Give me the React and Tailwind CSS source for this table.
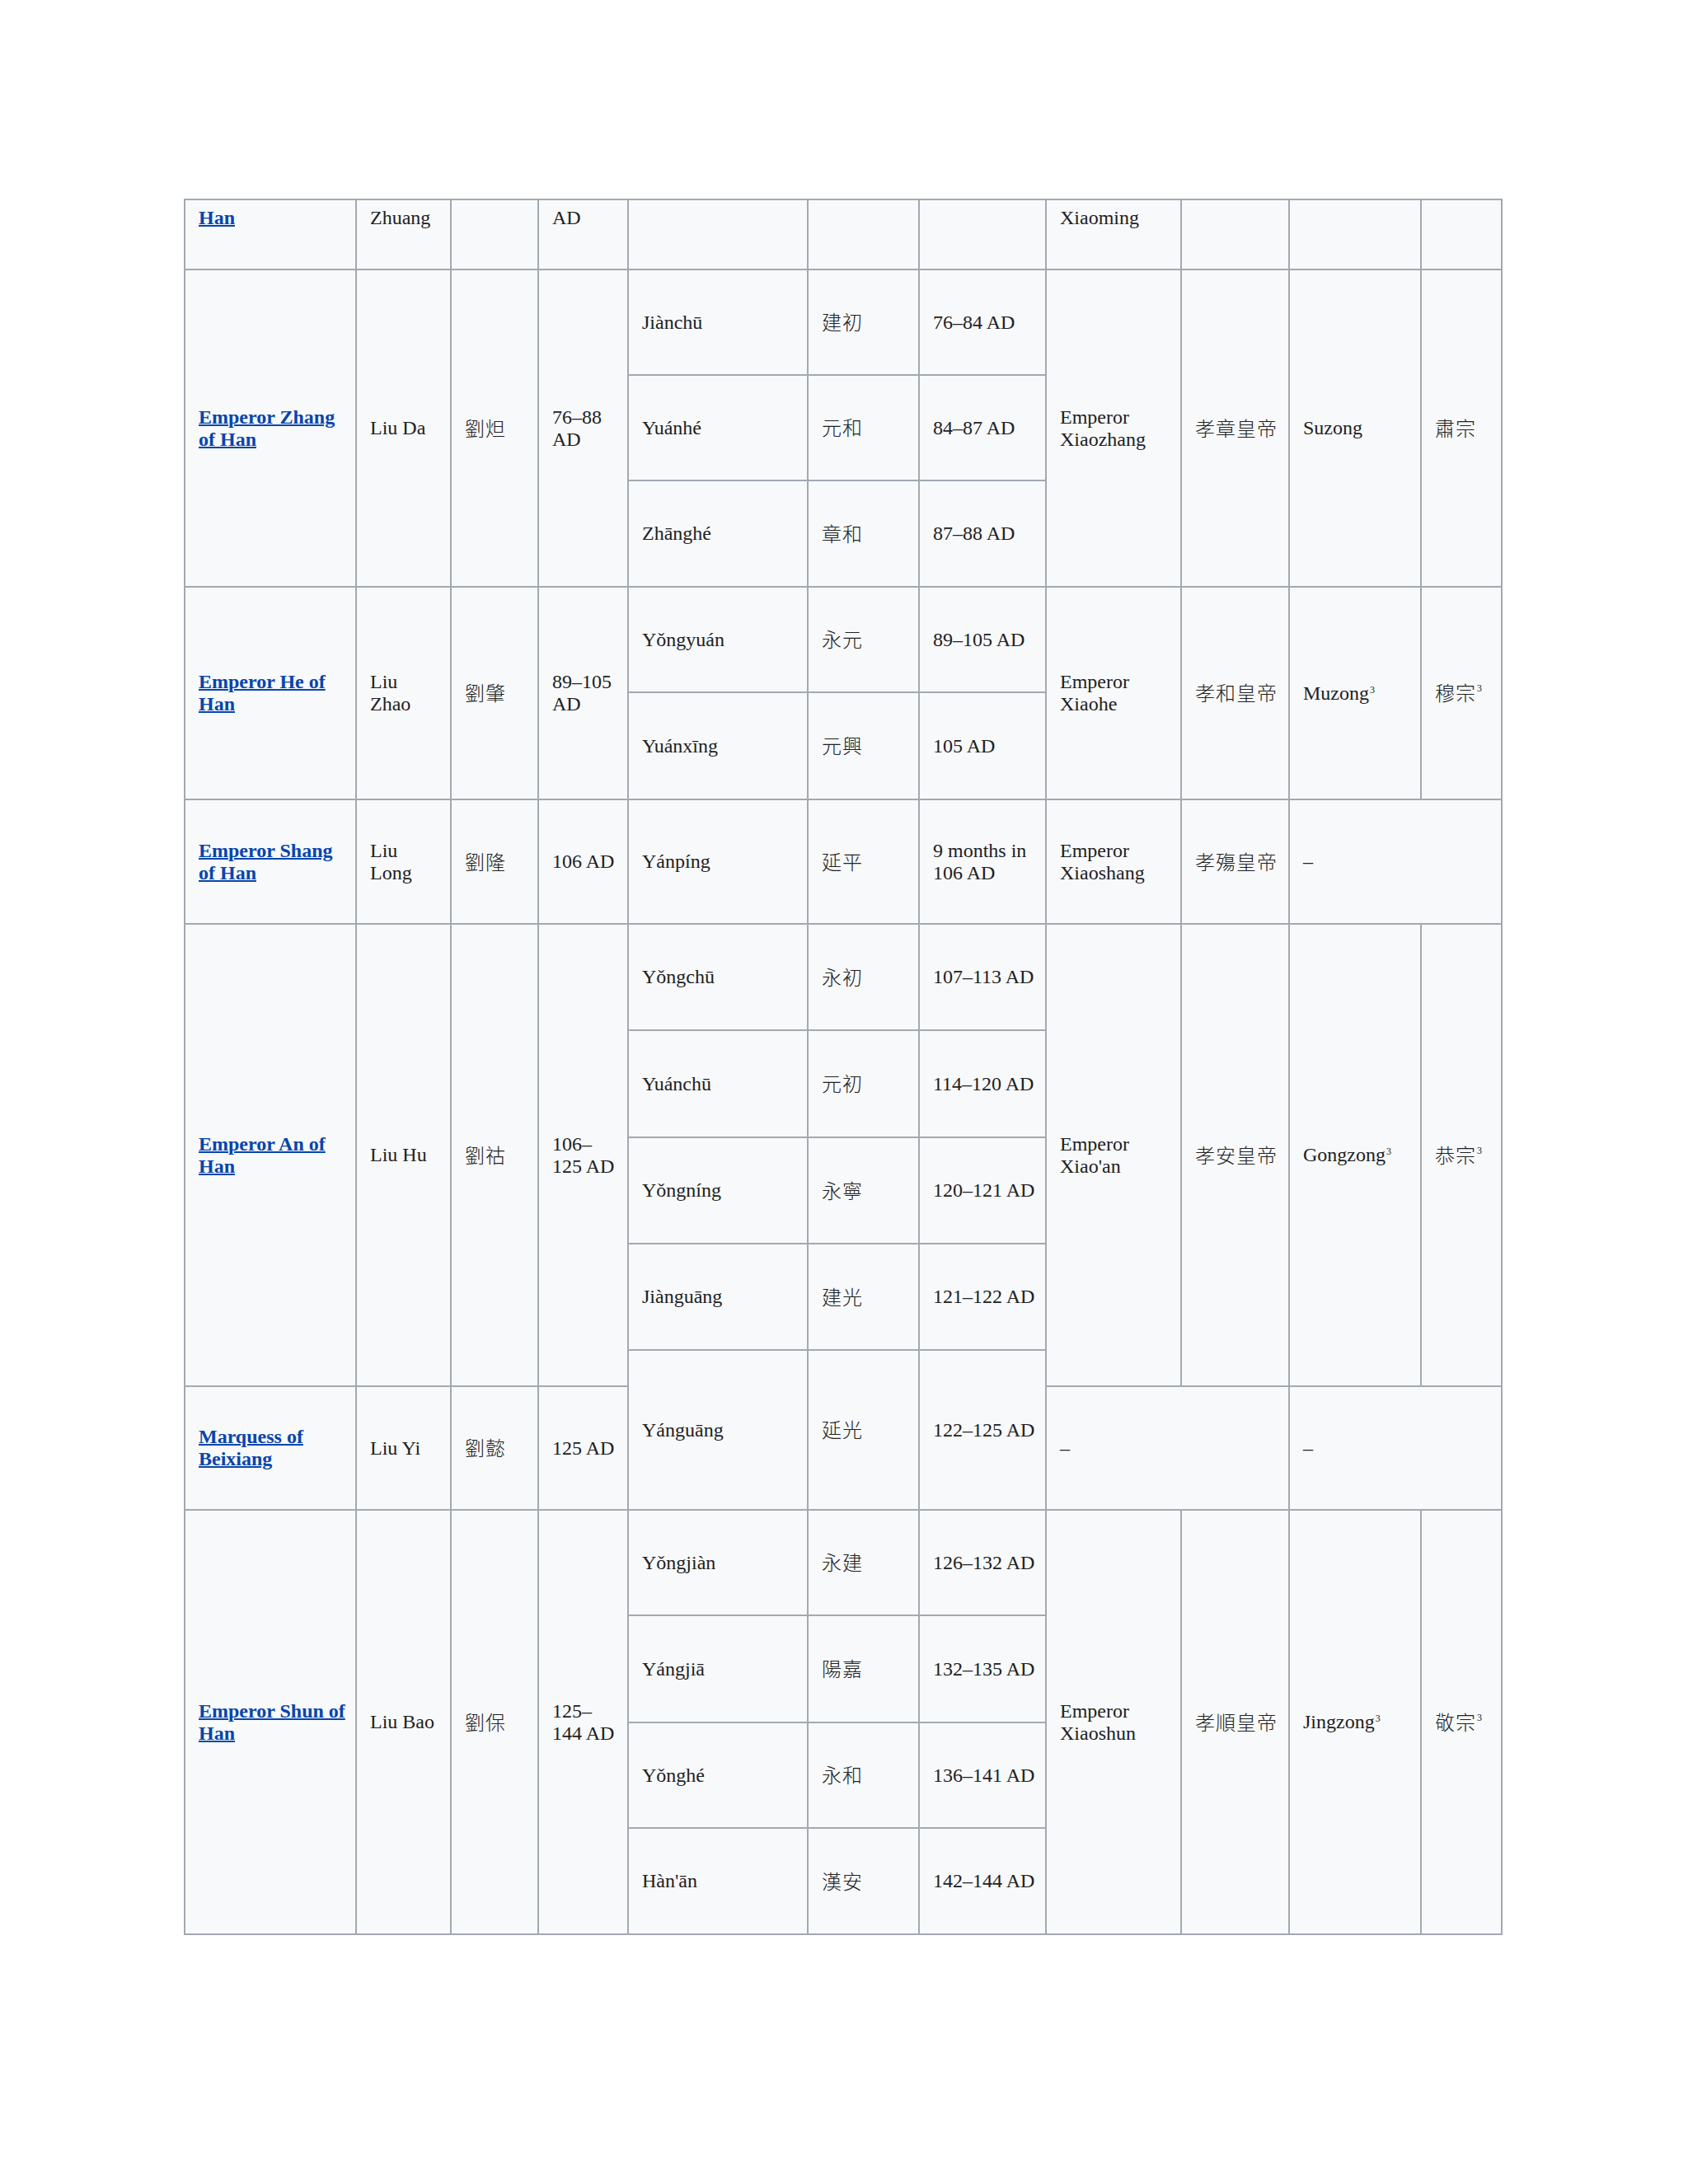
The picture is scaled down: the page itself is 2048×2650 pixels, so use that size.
import React from "react";

const FONT = { fontFamily: '"Liberation Serif", "Noto Sans CJK TC", serif' };

function L({ children }) {
  return (
    <a className="font-bold text-[#0645ad] underline decoration-[2px]">{children}</a>
  );
}

function Sup() {
  return <span className="text-[12px] leading-none align-[8px] ml-[1px] font-normal">3</span>;
}

function C({ children }) {
  return <span className="font-light tracking-[1px] align-[-3px]">{children}</span>;
}

const cells = [
  // row 0 (continuation row)
  { c: "col-start-1 row-start-1", top: true, t: <L>Han</L> },
  { c: "col-start-2 row-start-1", top: true, t: "Zhuang" },
  { c: "col-start-3 row-start-1", top: true, t: "" },
  { c: "col-start-4 row-start-1", top: true, t: "AD" },
  { c: "col-start-5 row-start-1", top: true, t: "" },
  { c: "col-start-6 row-start-1", top: true, t: "" },
  { c: "col-start-7 row-start-1", top: true, t: "" },
  { c: "col-start-8 row-start-1", top: true, t: "Xiaoming" },
  { c: "col-start-9 row-start-1", top: true, t: "" },
  { c: "col-start-10 row-start-1", top: true, t: "" },
  { c: "col-start-11 row-start-1", top: true, t: "" },

  // Zhang
  { c: "col-start-1 row-start-2 row-span-3", t: <L>Emperor Zhang<br />of Han</L> },
  { c: "col-start-2 row-start-2 row-span-3", t: "Liu Da" },
  { c: "col-start-3 row-start-2 row-span-3", t: <C>劉炟</C> },
  { c: "col-start-4 row-start-2 row-span-3", t: <>76–88<br />AD</> },
  { c: "col-start-5 row-start-2", t: "Jiànchū" },
  { c: "col-start-6 row-start-2", t: <C>建初</C> },
  { c: "col-start-7 row-start-2", t: "76–84 AD" },
  { c: "col-start-5 row-start-3", t: "Yuánhé" },
  { c: "col-start-6 row-start-3", t: <C>元和</C> },
  { c: "col-start-7 row-start-3", t: "84–87 AD" },
  { c: "col-start-5 row-start-4", t: "Zhānghé" },
  { c: "col-start-6 row-start-4", t: <C>章和</C> },
  { c: "col-start-7 row-start-4", t: "87–88 AD" },
  { c: "col-start-8 row-start-2 row-span-3", t: <>Emperor<br />Xiaozhang</> },
  { c: "col-start-9 row-start-2 row-span-3", t: <C>孝章皇帝</C> },
  { c: "col-start-10 row-start-2 row-span-3", t: "Suzong" },
  { c: "col-start-11 row-start-2 row-span-3", t: <C>肅宗</C> },

  // He
  { c: "col-start-1 row-start-5 row-span-2", t: <L>Emperor He of<br />Han</L> },
  { c: "col-start-2 row-start-5 row-span-2", t: <>Liu<br />Zhao</> },
  { c: "col-start-3 row-start-5 row-span-2", t: <C>劉肇</C> },
  { c: "col-start-4 row-start-5 row-span-2", t: <>89–105<br />AD</> },
  { c: "col-start-5 row-start-5", t: "Yǒngyuán" },
  { c: "col-start-6 row-start-5", t: <C>永元</C> },
  { c: "col-start-7 row-start-5", t: "89–105 AD" },
  { c: "col-start-5 row-start-6", t: "Yuánxīng" },
  { c: "col-start-6 row-start-6", t: <C>元興</C> },
  { c: "col-start-7 row-start-6", t: "105 AD" },
  { c: "col-start-8 row-start-5 row-span-2", t: <>Emperor<br />Xiaohe</> },
  { c: "col-start-9 row-start-5 row-span-2", t: <C>孝和皇帝</C> },
  { c: "col-start-10 row-start-5 row-span-2", t: <>Muzong<Sup /></> },
  { c: "col-start-11 row-start-5 row-span-2", t: <><C>穆宗</C><Sup /></> },

  // Shang
  { c: "col-start-1 row-start-7", t: <L>Emperor Shang<br />of Han</L> },
  { c: "col-start-2 row-start-7", t: <>Liu<br />Long</> },
  { c: "col-start-3 row-start-7", t: <C>劉隆</C> },
  { c: "col-start-4 row-start-7", t: "106 AD" },
  { c: "col-start-5 row-start-7", t: "Yánpíng" },
  { c: "col-start-6 row-start-7", t: <C>延平</C> },
  { c: "col-start-7 row-start-7", t: <>9 months in<br />106 AD</> },
  { c: "col-start-8 row-start-7", t: <>Emperor<br />Xiaoshang</> },
  { c: "col-start-9 row-start-7", t: <C>孝殤皇帝</C> },
  { c: "col-start-10 row-start-7 col-span-2", t: "–" },

  // An
  { c: "col-start-1 row-start-8 row-span-5", t: <L>Emperor An of<br />Han</L> },
  { c: "col-start-2 row-start-8 row-span-5", t: "Liu Hu" },
  { c: "col-start-3 row-start-8 row-span-5", t: <C>劉祜</C> },
  { c: "col-start-4 row-start-8 row-span-5", t: <>106–<br />125 AD</> },
  { c: "col-start-5 row-start-8", t: "Yǒngchū" },
  { c: "col-start-6 row-start-8", t: <C>永初</C> },
  { c: "col-start-7 row-start-8", t: "107–113 AD" },
  { c: "col-start-5 row-start-9", t: "Yuánchū" },
  { c: "col-start-6 row-start-9", t: <C>元初</C> },
  { c: "col-start-7 row-start-9", t: "114–120 AD" },
  { c: "col-start-5 row-start-10", t: "Yǒngníng" },
  { c: "col-start-6 row-start-10", t: <C>永寧</C> },
  { c: "col-start-7 row-start-10", t: "120–121 AD" },
  { c: "col-start-5 row-start-11", t: "Jiànguāng" },
  { c: "col-start-6 row-start-11", t: <C>建光</C> },
  { c: "col-start-7 row-start-11", t: "121–122 AD" },
  { c: "col-start-5 row-start-12 row-span-2", t: "Yánguāng" },
  { c: "col-start-6 row-start-12 row-span-2", t: <C>延光</C> },
  { c: "col-start-7 row-start-12 row-span-2", t: "122–125 AD" },
  { c: "col-start-8 row-start-8 row-span-5", t: <>Emperor<br />Xiao'an</> },
  { c: "col-start-9 row-start-8 row-span-5", t: <C>孝安皇帝</C> },
  { c: "col-start-10 row-start-8 row-span-5", t: <>Gongzong<Sup /></> },
  { c: "col-start-11 row-start-8 row-span-5", t: <><C>恭宗</C><Sup /></> },

  // Beixiang
  { c: "col-start-1 row-start-13", t: <L>Marquess of<br />Beixiang</L> },
  { c: "col-start-2 row-start-13", t: "Liu Yi" },
  { c: "col-start-3 row-start-13", t: <C>劉懿</C> },
  { c: "col-start-4 row-start-13", t: "125 AD" },
  { c: "col-start-8 row-start-13 col-span-2", t: "–" },
  { c: "col-start-10 row-start-13 col-span-2", t: "–" },

  // Shun
  { c: "col-start-1 row-start-14 row-span-4", t: <L>Emperor Shun of<br />Han</L> },
  { c: "col-start-2 row-start-14 row-span-4", t: "Liu Bao" },
  { c: "col-start-3 row-start-14 row-span-4", t: <C>劉保</C> },
  { c: "col-start-4 row-start-14 row-span-4", t: <>125–<br />144 AD</> },
  { c: "col-start-5 row-start-14", t: "Yǒngjiàn" },
  { c: "col-start-6 row-start-14", t: <C>永建</C> },
  { c: "col-start-7 row-start-14", t: "126–132 AD" },
  { c: "col-start-5 row-start-15", t: "Yángjiā" },
  { c: "col-start-6 row-start-15", t: <C>陽嘉</C> },
  { c: "col-start-7 row-start-15", t: "132–135 AD" },
  { c: "col-start-5 row-start-16", t: "Yǒnghé" },
  { c: "col-start-6 row-start-16", t: <C>永和</C> },
  { c: "col-start-7 row-start-16", t: "136–141 AD" },
  { c: "col-start-5 row-start-17", t: "Hàn'ān" },
  { c: "col-start-6 row-start-17", t: <C>漢安</C> },
  { c: "col-start-7 row-start-17", t: "142–144 AD" },
  { c: "col-start-8 row-start-14 row-span-4", t: <>Emperor<br />Xiaoshun</> },
  { c: "col-start-9 row-start-14 row-span-4", t: <C>孝順皇帝</C> },
  { c: "col-start-10 row-start-14 row-span-4", t: <>Jingzong<Sup /></> },
  { c: "col-start-11 row-start-14 row-span-4", t: <><C>敬宗</C><Sup /></> },
];

export default function App() {
  return (
    <div className="min-h-[2650px] w-[2048px] bg-white pt-[241px] pl-[223px]" style={FONT}>
      <div className="grid w-[1600px] gap-[2px] bg-[#a2a9b1] p-[2px] grid-cols-[206px_113px_104px_107px_216px_133px_152px_162px_129px_158px_96px] grid-rows-[83px_126px_126px_127px_126px_128px_149px_127px_128px_127px_127px_42px_148px_126px_128px_126px_127px] text-[24px] leading-[27px] text-[#202122]">
        {cells.map((cell, i) => (
          <div
            key={i}
            className={
              cell.c +
              " bg-[#f8f9fa] pl-[16px] pr-[4px] whitespace-nowrap flex " +
              (cell.top ? "items-start pt-[8px]" : "items-center")
            }
          >
            <div>{cell.t}</div>
          </div>
        ))}
      </div>
    </div>
  );
}
